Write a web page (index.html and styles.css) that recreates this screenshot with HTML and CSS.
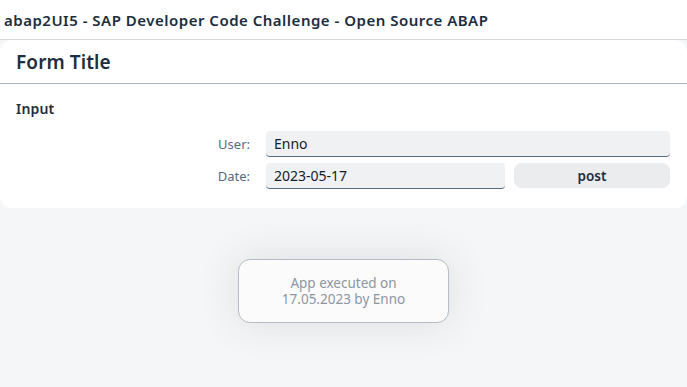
FILE: index.html
```html
<!DOCTYPE html>
<html lang="en">
<head>
<meta charset="utf-8">
<title>abap2UI5</title>
<link rel="stylesheet" href="styles.css">
</head>
<body>
<header class="shell-bar">
  <span class="shell-title">abap2UI5 - SAP Developer Code Challenge - Open Source ABAP</span>
</header>
<main class="page">
  <section class="card">
    <div class="card-header">
      <h1 class="card-title">Form Title</h1>
    </div>
    <div class="card-body">
      <h2 class="group-title">Input</h2>
      <div class="form">
        <label class="label">User:</label>
        <div class="field">
          <div class="input">Enno</div>
        </div>
        <label class="label">Date:</label>
        <div class="field split">
          <div class="input">2023-05-17</div>
          <button class="btn">post</button>
        </div>
      </div>
    </div>
  </section>
</main>
<div class="toast">App executed on<br>17.05.2023 by Enno</div>
</body>
</html>
```
FILE: styles.css
```css
html, body {
  margin: 0;
  padding: 0;
  height: 100%;
}
body {
  background: #f5f6f7;
  font-family: "Noto Sans", "Open Sans", sans-serif;
  color: #1d2d3e;
  position: relative;
  overflow: hidden;
}
.shell-bar {
  height: 39px;
  background: #ffffff;
  border-bottom: 1px solid #d9d9d9;
  display: flex;
  align-items: center;
  padding-left: 4px;
  box-sizing: content-box;
}
.shell-title {
  font-size: 15px;
  font-weight: 600;
  color: #1d2d3e;
  letter-spacing: 0.5px;
}
.card {
  background: #ffffff;
  border-radius: 12px;
  padding-bottom: 19px;
}
.card-header {
  height: 43px;
  border-bottom: 1px solid #a8b2bd;
  display: flex;
  align-items: center;
  padding: 0 16px;
}
.card-title {
  margin: 0;
  font-size: 19px;
  font-weight: 600;
  color: #1d2d3e;
  letter-spacing: 0.1px;
}
.card-body {
  padding: 0 17px 0 16px;
}
.group-title {
  margin: 0;
  padding-top: 15px;
  height: 32px;
  font-size: 14px;
  font-weight: 600;
  color: #1d2d3e;
  letter-spacing: 0.2px;
}
.form {
  display: grid;
  grid-template-columns: 234px 1fr;
  column-gap: 16px;
  row-gap: 6px;
  align-items: center;
}
.label {
  text-align: right;
  font-size: 13px;
  color: #556b82;
}
.field {
  display: flex;
}
.field.split {
  display: grid;
  grid-template-columns: 239px 1fr;
  column-gap: 9px;
}
.input {
  flex: 1;
  height: 25px;
  line-height: 25px;
  background: #eff1f2;
  border-radius: 4px;
  border-bottom: 1px solid #556b82;
  padding: 0 8px;
  font-size: 14px;
  color: #131e29;
}
.btn {
  height: 25px;
  border: none;
  border-radius: 8px;
  background: #ebecee;
  font-family: inherit;
  font-size: 13.5px;
  font-weight: 600;
  color: #1d2d3e;
  padding: 0;
}
.toast {
  position: absolute;
  left: 238px;
  top: 259px;
  width: 209px;
  height: 62px;
  box-sizing: content-box;
  border: 1px solid #b4bcc5;
  border-radius: 12px;
  background: #fbfbfc;
  box-shadow: 0 0 40px rgba(34, 53, 72, 0.12);
  display: flex;
  align-items: center;
  justify-content: center;
  text-align: center;
  font-size: 13.5px;
  line-height: 16.5px;
  color: #8c96a1;
}
```
